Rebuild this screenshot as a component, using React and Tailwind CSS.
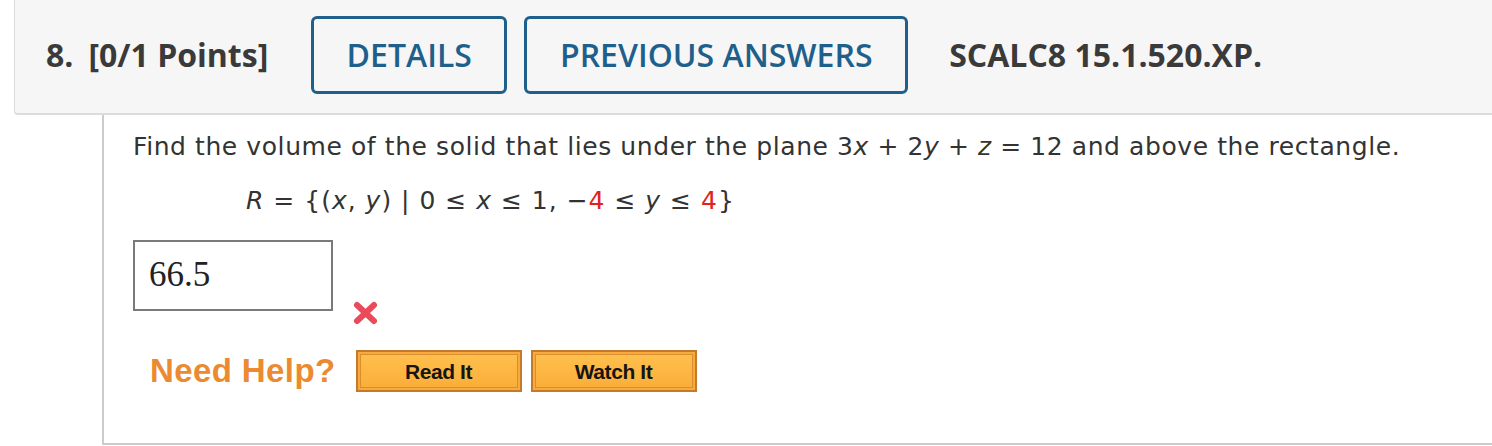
import React from 'react'

function HelpButton({ children }) {
  return (
    <button className="h-[42px] w-[166px] border-2 border-[#c27a2c] bg-[#f9aa3c] p-[2px]">
      <span className="flex h-full w-full items-center justify-center border border-[#d98d30] bg-gradient-to-b from-[#ffbf4d] to-[#fbae3a] pt-[2px] text-[21px] font-bold tracking-[-0.4px] text-[#151515] [font-family:'Liberation_Sans',Arial,sans-serif]">
        {children}
      </span>
    </button>
  )
}

export default function App() {
  return (
    <div className="h-[446px] w-[1492px] overflow-hidden bg-white">
      <header className="ml-[14px] flex h-[115px] items-start rounded-bl-[4px] border-b-2 border-l border-[#dcdcdc] bg-[#f6f6f6] pt-[16px] text-[32px] [font-family:'Open_Sans',sans-serif]">
        <div className="flex h-[78px] items-center pl-[31px] font-bold text-[#3a3a3a]">
          <span>8.</span>
          <span className="ml-[15px]">[0/1 Points]</span>
        </div>
        <button className="ml-[43px] flex h-[78px] w-[196px] items-center justify-center rounded-[6px] border-[3px] border-[#1f5f8b] font-semibold text-[#1f5f8b]">
          DETAILS
        </button>
        <button className="ml-[17px] flex h-[78px] w-[384px] items-center justify-center rounded-[6px] border-[3px] border-[#1f5f8b] font-semibold text-[#1f5f8b]">
          PREVIOUS ANSWERS
        </button>
        <div className="ml-[41px] flex h-[78px] items-center font-bold text-[#3a3a3a]">
          SCALC8 15.1.520.XP.
        </div>
      </header>
      <main className="ml-[102px] h-[330px] border-b-2 border-l-2 border-[#cccccc] pl-[29px] pt-[17px] text-[#333] [font-family:'DejaVu_Sans',Verdana,sans-serif]">
        <p className="text-[25px] leading-[30px] tracking-[0.58px]">
          Find the volume of the solid that lies under the plane 3<i>x</i> + 2<i>y</i> + <i>z</i> = 12 and above the rectangle.
        </p>
        <p className="mt-[24px] pl-[113px] text-[25px] leading-[30px] tracking-[1px]">
          <i>R</i> = {'{'}(<i>x</i>, <i>y</i>) | 0 ≤ <i>x</i> ≤ 1, −<span className="text-[#e3211b]">4</span> ≤ <i>y</i> ≤ <span className="text-[#e3211b]">4</span>{'}'}
        </p>
        <div className="mt-[24px] flex items-start">
          <div className="flex h-[71px] w-[200px] items-center border-2 border-[#7a7a7a] pl-[14px] text-[35px] text-[#222] [font-family:'Liberation_Serif',serif]">
            66.5
          </div>
          <svg className="ml-[19px] mt-[60px]" width="27" height="26" viewBox="0 0 27 26">
            <path d="M5 5 L22 21 M22 5 L5 21" stroke="#ea4a5a" strokeWidth="6" strokeLinecap="round" />
          </svg>
        </div>
        <div className="mt-[20px] flex items-center pl-[17px]">
          <span className="text-[33px] font-bold tracking-[0.4px] text-[#ec8a32] [font-family:'Liberation_Sans',Arial,sans-serif]">
            Need Help?
          </span>
          <div className="ml-[20px] flex gap-[9px]">
            <HelpButton>Read It</HelpButton>
            <HelpButton>Watch It</HelpButton>
          </div>
        </div>
      </main>
    </div>
  )
}
